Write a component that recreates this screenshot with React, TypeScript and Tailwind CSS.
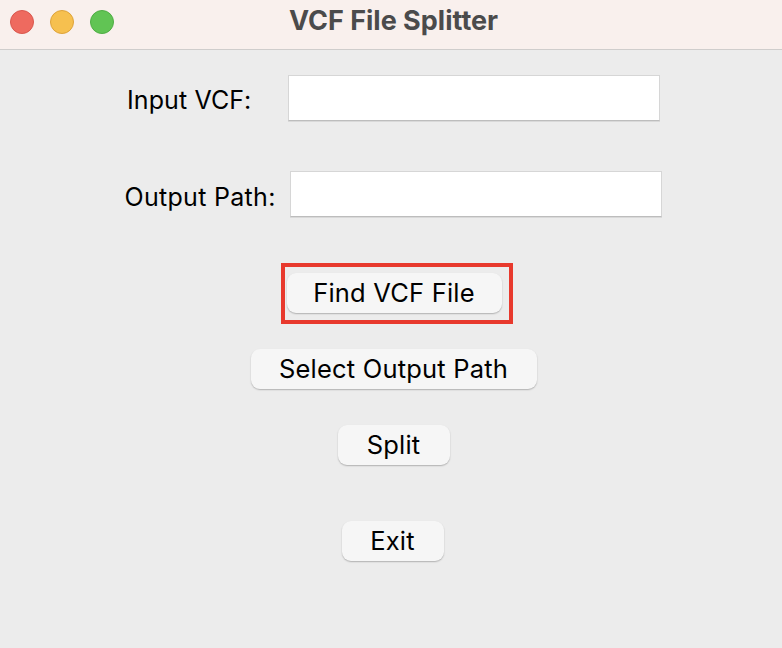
const font = { fontFamily: 'Inter, "Liberation Sans", Arial, sans-serif' };

function MacButton({ label, width }: { label: string; width: string }) {
  return (
    <button
      className={`h-[40px] ${width} rounded-[9px] bg-[#f6f6f6] text-[25.5px] tracking-[0.2px] text-black shadow-[0_1px_1.5px_rgba(0,0,0,0.25)] flex items-center justify-center`}
    >
      {label}
    </button>
  );
}

export default function App() {
  return (
    <div className="w-[782px] h-[648px] flex flex-col bg-[#ececec] overflow-hidden" style={font}>
      {/* title bar */}
      <div className="relative h-[50px] shrink-0 bg-[#f9f0ed] border-b border-[#cfcdcc] flex items-center justify-center">
        <div className="absolute left-[10px] top-[10px] flex gap-[16px]">
          <span className="w-[24px] h-[24px] rounded-full bg-[#ee6a5f] border border-[#d9574d]" />
          <span className="w-[24px] h-[24px] rounded-full bg-[#f6c04f] border border-[#dea33a]" />
          <span className="w-[24px] h-[24px] rounded-full bg-[#61c454] border border-[#4fad44]" />
        </div>
        <h1 className="text-[27px] font-bold text-[#4b4b4b] ml-[5px] -mt-[6px]">VCF File Splitter</h1>
      </div>

      {/* body */}
      <div className="flex-1 flex flex-col items-center pt-[25px] pl-[5px]">
        <div className="flex items-center h-[46px]">
          <label className="w-[161px] pt-[6px] text-[25px] tracking-[0.1px] text-black">Input VCF:</label>
          <input className="w-[372px] h-[46px] bg-white border border-[#d6d6d6] border-b-[#bdbdbd] shadow-[0_1px_0_rgba(0,0,0,0.08)] outline-none" />
        </div>
        <div className="flex items-center h-[46px] mt-[50px] -ml-[1px]">
          <label className="w-[165px] pt-[7px] text-[25px] tracking-[0.3px] text-black">Output Path:</label>
          <input className="w-[372px] h-[46px] bg-white border border-[#d6d6d6] border-b-[#bdbdbd] shadow-[0_1px_0_rgba(0,0,0,0.08)] outline-none" />
        </div>

        <div className="mt-[46px] ml-[6px] w-[232px] h-[61px] border-4 border-[#e8392d] pl-[2px] pt-[6px]">
          <MacButton label="Find VCF File" width="w-[215px]" />
        </div>

        <div className="mt-[25px]">
          <MacButton label="Select Output Path" width="w-[286px]" />
        </div>
        <div className="mt-[36px]">
          <MacButton label="Split" width="w-[112px]" />
        </div>
        <div className="mt-[56px] -ml-[2px]">
          <MacButton label="Exit" width="w-[102px]" />
        </div>
      </div>
    </div>
  );
}
